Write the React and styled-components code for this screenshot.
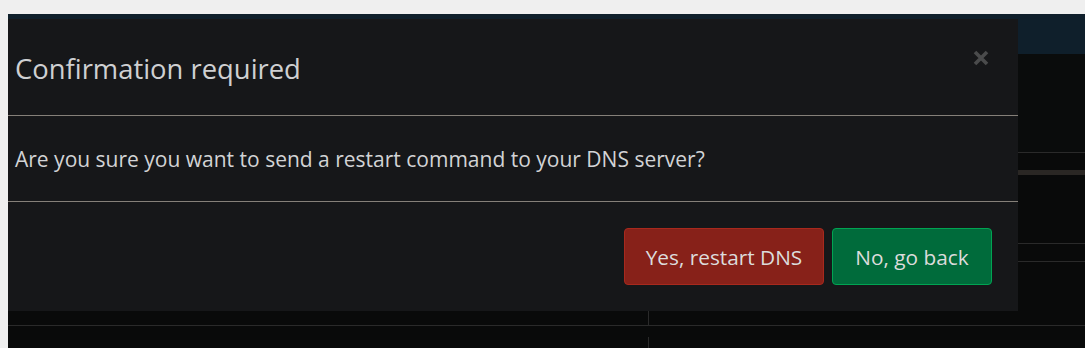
import React from 'react'
import styled, { createGlobalStyle } from 'styled-components'

const GlobalStyle = createGlobalStyle`
  html, body {
    margin: 0;
    padding: 0;
    background: #efefef;
    overflow: hidden;
  }
  body {
    font-family: "Open Sans", "Noto Sans", sans-serif;
  }
`

const Page = styled.div`
  position: relative;
  margin: 14px 0 0 8px;
  height: 334px;
  background: #090a0a;
  display: flex;
  flex-direction: column;
`

const TopBar = styled.div`
  height: 40px;
  background: #0f1f2b;
`

const Content = styled.div`
  flex: 1;
  display: flex;
  flex-direction: column;
`

const Block = styled.div`
  height: ${({ h }) => h}px;
  background: ${({ bg }) => bg || 'transparent'};
  border-bottom: ${({ line }) => (line ? '1px solid #2a2a2a' : 'none')};
`

const BottomGrid = styled.div`
  flex: 1;
  display: grid;
  grid-template-columns: 641px 1fr;
`

const Cell = styled.div`
  border-right: ${({ divider }) => (divider ? '1px solid #2a2a2a' : 'none')};
  border-bottom: ${({ line }) => (line ? '1px solid #2a2a2a' : 'none')};
  height: ${({ h }) => (h ? `${h}px` : 'auto')};
`

const Modal = styled.div`
  position: absolute;
  left: 0;
  top: 5px;
  width: 1010px;
  background: #161719;
  color: #d4d4d4;
`

const Header = styled.div`
  height: 96px;
  display: flex;
  align-items: center;
  justify-content: space-between;
  padding: 0 26px 0 7px;
  border-bottom: 1px solid #858079;
`

const Title = styled.h4`
  margin: 0;
  font-size: 27.4px;
  font-weight: 400;
  color: #cfd0d2;
  padding-top: 2px;
`

const Close = styled.button`
  background: none;
  border: none;
  padding: 0;
  margin-top: -18px;
  margin-right: 2px;
  width: 18px;
  height: 18px;
  display: flex;
  align-items: center;
  justify-content: center;
  cursor: pointer;
`

const Body = styled.div`
  height: 85px;
  display: flex;
  align-items: center;
  padding: 0 7px;
  border-bottom: 1px solid #858079;
  font-size: 21px;
  color: #d2d3d5;
`

const Footer = styled.div`
  display: flex;
  justify-content: flex-end;
  gap: 8px;
  padding: 26px 26px 26px 7px;
`

const Button = styled.button`
  height: 57px;
  width: ${({ w }) => w}px;
  border-radius: 4px;
  font-family: "Open Sans", "Noto Sans", sans-serif;
  font-size: 20.8px;
  color: #dcdcdc;
  background: ${({ variant }) => (variant === 'danger' ? '#872119' : '#006b3b')};
  border: 1px solid ${({ variant }) => (variant === 'danger' ? '#a8291d' : '#00a452')};
  cursor: pointer;
`

function CloseIcon() {
  return (
    <svg width="16" height="16" viewBox="0 0 16 16">
      <path d="M2 2 L14 14 M14 2 L2 14" stroke="#4a4b4c" strokeWidth="3.6" strokeLinecap="butt" />
    </svg>
  )
}

export default function App() {
  return (
    <>
      <GlobalStyle />
      <Page>
        <TopBar />
        <Content>
          <Block h={98} bg="#0a0c0c" line />
          <Block h={17} />
          <Block h={5} bg="#2a2724" />
          <Block h={68} line />
          <Block h={17} line />
          <BottomGrid>
            <Cell divider line h={63} />
            <Cell line h={63} />
            <Cell divider />
            <Cell />
          </BottomGrid>
        </Content>

        <Modal role="dialog">
          <Header>
            <Title>Confirmation required</Title>
            <Close aria-label="Close">
              <CloseIcon />
            </Close>
          </Header>
          <Body>Are you sure you want to send a restart command to your DNS server?</Body>
          <Footer>
            <Button w={200} variant="danger">Yes, restart DNS</Button>
            <Button w={160} variant="success">No, go back</Button>
          </Footer>
        </Modal>
      </Page>
    </>
  )
}
